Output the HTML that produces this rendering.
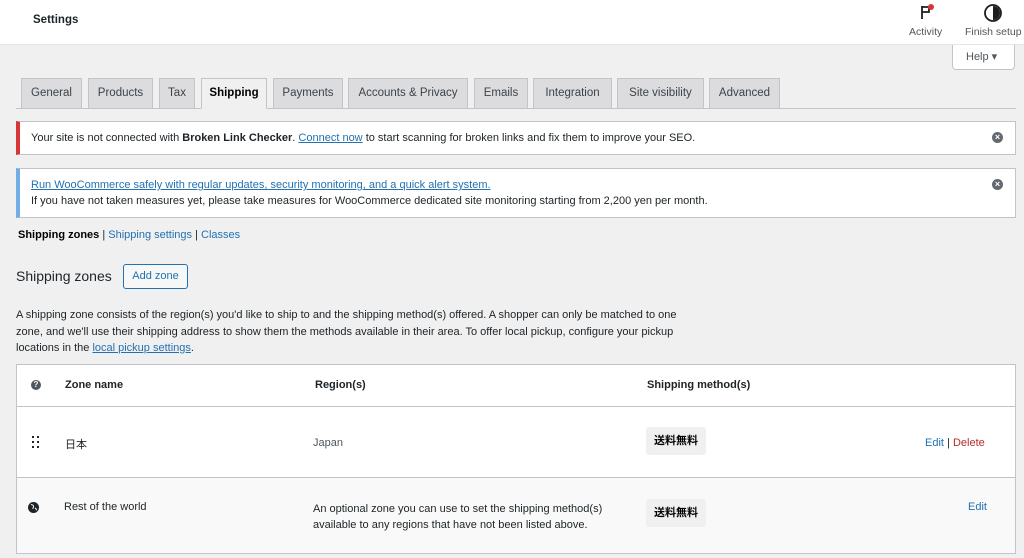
<!DOCTYPE html>
<html><head><meta charset="utf-8">
<style>
*{box-sizing:border-box;margin:0;padding:0}
body{width:1024px;height:558px;overflow:hidden;background:#f0f0f1;font-family:"Liberation Sans","Noto Sans CJK JP",sans-serif;font-size:11px;color:#1d2327;position:relative}
.a{position:absolute;white-space:nowrap}
a{color:#2271b1}
.top{left:0;top:0;width:1024px;height:45px;background:#fff;border-bottom:1px solid #e5e5e5}
.tab{position:absolute;top:78px;height:30px;background:#dcdcde;border:1px solid #c3c4c7;border-bottom:none;color:#3c434a;font-size:11.5px;line-height:29px;text-align:center}
.tab.on{background:#f0f0f1;color:#000;height:31px;border-bottom:1px solid #f0f0f1;font-weight:bold}
.notice{background:#fff;border:1px solid #c3c4c7;border-left-width:4px}
.x{width:11px;height:11px;border-radius:50%;background:#646970;color:#fff;font-size:9px;line-height:11px;text-align:center;font-weight:bold}
.pill{background:#f0f0f1;border-radius:3px;font-size:11px;font-weight:bold;padding:0 8px;height:28px;line-height:28px;color:#000}
</style></head><body>
<div class="a top"></div>
<div class="a" style="left:33px;top:14px;font-size:11.5px;font-weight:bold;color:#1d2327">Settings</div>
<svg class="a" style="left:918px;top:3px" width="18" height="18" viewBox="0 0 18 18"><path d="M4 3v13M4 4h7v5H4" fill="none" stroke="#1e1e1e" stroke-width="1.8"/><circle cx="13" cy="4" r="3" fill="#d63638"/></svg>
<div class="a" style="left:909px;top:26px;font-size:10.5px;color:#50575e">Activity</div>
<svg class="a" style="left:983px;top:3px" width="20" height="20" viewBox="0 0 20 20"><circle cx="10" cy="10" r="8" fill="none" stroke="#1e1e1e" stroke-width="1.8"/><path d="M10 3a7 7 0 0 1 0 14z" fill="#1e1e1e"/></svg>
<div class="a" style="left:965px;top:26px;font-size:10.5px;color:#50575e">Finish setup</div>
<div class="a" style="left:952px;top:45px;width:63px;height:25px;background:#fff;border:1px solid #c3c4c7;border-top:none;border-radius:0 0 4px 4px;font-size:11px;color:#50575e;line-height:24px;padding-left:13px">Help ▾</div>
<div class="a" style="left:16px;top:108px;width:1000px;height:1px;background:#c3c4c7"></div>
<div class="tab" style="left:21px;width:61px">General</div>
<div class="tab" style="left:88px;width:65px">Products</div>
<div class="tab" style="left:159px;width:36px">Tax</div>
<div class="tab on" style="left:201px;width:66px">Shipping</div>
<div class="tab" style="left:273px;width:70px">Payments</div>
<div class="tab" style="left:348px;width:120px">Accounts &amp; Privacy</div>
<div class="tab" style="left:474px;width:54px">Emails</div>
<div class="tab" style="left:533px;width:79px">Integration</div>
<div class="tab" style="left:617px;width:87px">Site visibility</div>
<div class="tab" style="left:709px;width:71px">Advanced</div>

<div class="a notice" style="left:16px;top:121px;width:1000px;height:34px;border-left-color:#d63638"></div>
<div class="a" style="left:31px;top:132px">Your site is not connected with <b>Broken Link Checker</b>. <a href="#">Connect now</a> to start scanning for broken links and fix them to improve your SEO.</div>
<div class="a x" style="left:992px;top:132px">×</div>
<div class="a notice" style="left:16px;top:168px;width:1000px;height:50px;border-left-color:#72aee6"></div>
<div class="a" style="left:31px;top:179px"><a href="#">Run WooCommerce safely with regular updates, security monitoring, and a quick alert system.</a></div>
<div class="a" style="left:31px;top:195px">If you have not taken measures yet, please take measures for WooCommerce dedicated site monitoring starting from 2,200 yen per month.</div>
<div class="a x" style="left:992px;top:179px">×</div>
<div class="a" style="left:18px;top:229px"><b style="color:#000">Shipping zones</b> | <a href="#" style="text-decoration:none">Shipping settings</a> | <a href="#" style="text-decoration:none">Classes</a></div>
<div class="a" style="left:16px;top:268px;font-size:14px;color:#1d2327">Shipping zones</div>
<div class="a" style="left:123px;top:264px;width:65px;height:25px;border:1px solid #2271b1;border-radius:3px;background:#f6f7f7;color:#2271b1;font-size:11px;line-height:23px;text-align:center">Add zone</div>
<div class="a" style="left:16px;top:307px;width:680px;line-height:16.5px;white-space:normal">A shipping zone consists of the region(s) you'd like to ship to and the shipping method(s) offered. A shopper can only be matched to one zone, and we'll use their shipping address to show them the methods available in their area. To offer local pickup, configure your pickup locations in the <a href="#">local pickup settings</a>.</div>

<div class="a" style="left:16px;top:364px;width:1000px;height:190px;background:#fff;border:1px solid #c3c4c7"></div>
<div class="a" style="left:17px;top:406px;width:998px;height:1px;background:#c3c4c7"></div>
<div class="a" style="left:17px;top:477px;width:998px;height:76px;background:#f9f9f9;border-top:1px solid #c3c4c7"></div>
<div class="a" style="left:31px;top:380px;width:10px;height:10px;border-radius:50%;background:#50575e;color:#fff;font-size:8px;line-height:10px;text-align:center;font-weight:bold">?</div>
<div class="a" style="left:65px;top:379px;font-weight:bold">Zone name</div>
<div class="a" style="left:315px;top:379px;font-weight:bold">Region(s)</div>
<div class="a" style="left:647px;top:379px;font-weight:bold">Shipping method(s)</div>
<svg class="a" style="left:32px;top:436px" width="8" height="12"><g fill="#1d2327"><rect x="0" y="0" width="2" height="2"/><rect x="5" y="0" width="2" height="2"/><rect x="0" y="5" width="2" height="2"/><rect x="5" y="5" width="2" height="2"/><rect x="0" y="10" width="2" height="2"/><rect x="5" y="10" width="2" height="2"/></g></svg>
<div class="a" style="left:65px;top:436px">日本</div>
<div class="a" style="left:313px;top:437px;color:#50575e">Japan</div>
<div class="a pill" style="left:646px;top:427px">送料無料</div>
<div class="a" style="left:925px;top:437px"><a href="#" style="text-decoration:none">Edit</a> | <a href="#" style="text-decoration:none;color:#b32d2e">Delete</a></div>
<svg class="a" style="left:28px;top:502px" width="11" height="11" viewBox="0 0 11 11"><circle cx="5.5" cy="5.5" r="5.5" fill="#1d2327"/><path d="M3 2.5c1 .5 2 0 2.5 1.5s-1 1.5-.5 3M7 6c.8.3 1.5 1 1.3 2.3" stroke="#fff" stroke-width="1" fill="none"/></svg>
<div class="a" style="left:64px;top:501px">Rest of the world</div>
<div class="a" style="left:313px;top:501px;line-height:16px">An optional zone you can use to set the shipping method(s)<br>available to any regions that have not been listed above.</div>
<div class="a pill" style="left:646px;top:499px">送料無料</div>
<div class="a" style="left:968px;top:501px"><a href="#" style="text-decoration:none">Edit</a></div>
</body></html>
